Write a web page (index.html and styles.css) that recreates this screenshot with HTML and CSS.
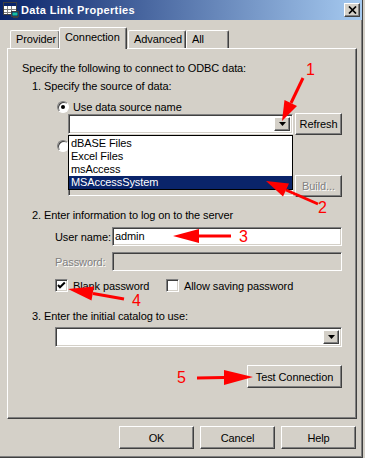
FILE: index.html
```html
<!DOCTYPE html>
<html lang="en">

<head>
    <meta charset="UTF-8">
    <meta name="viewport" content="width=device-width, initial-scale=1.0">
    <title>Data Link Properties</title>
    <link rel="stylesheet" href="styles.css">
</head>

<body>
    <div class="window">
        <div class="titlebar">
            <svg class="app-icon" width="16" height="16" viewBox="0 0 16 16">
                <rect x="0.5" y="0.5" width="13" height="12" fill="#fff" stroke="#404040" />
                <rect x="1" y="1" width="12" height="3" fill="#0a246a" />
                <path d="M1 7.5h12M1 10.5h12M4.5 4v8M8.5 4v8" stroke="#808080" />
                <rect x="8.5" y="9.5" width="7" height="5" fill="#0a246a" stroke="#404040" />
                <rect x="9.5" y="10.5" width="5" height="3" fill="#18c0a0" />
                <rect x="10" y="14.5" width="5" height="1.5" fill="#404040" />
            </svg>
            <span class="title">Data Link Properties</span>
            <span class="btn close-btn">
                <svg width="9" height="8" viewBox="0 0 9 8">
                    <path d="M1 0.5l7 7M8 0.5l-7 7" stroke="#000" stroke-width="1.7" />
                </svg>
            </span>
        </div>

        <div class="tabs">
            <div class="tab provider">Provider</div>
            <div class="tab connection active">Connection</div>
            <div class="tab advanced">Advanced</div>
            <div class="tab all">All</div>
        </div>

        <div class="panel">
            <div class="line">Specify the following to connect to ODBC data:</div>
            <div class="line step step-one">1. Specify the source of data:</div>
            <div class="option use-dsn"><span class="radio checked"></span>Use data source name</div>
            <div class="control-row source-row">
                <div class="field combo wide">
                    <span class="btn drop-btn">
                        <svg width="7" height="4" viewBox="0 0 7 4"><polygon points="0,0 7,0 3.5,4" /></svg>
                    </span>
                    <ul class="dropdown">
                        <li>dBASE Files</li>
                        <li>Excel Files</li>
                        <li>msAccess</li>
                        <li class="selected">MSAccessSystem</li>
                    </ul>
                </div>
                <button class="btn side-btn">Refresh</button>
            </div>
            <div class="option use-string"><span class="radio"></span></div>
            <div class="control-row build-row">
                <div class="field disabled wide"></div>
                <button class="btn side-btn disabled-text">Build...</button>
            </div>

            <div class="line step step-two">2. Enter information to log on to the server</div>
            <div class="login-row user-row">
                <span class="login-label">User name:</span>
                <div class="field text-field">admin</div>
            </div>
            <div class="login-row pass-row">
                <span class="login-label disabled-text">Password:</span>
                <div class="field text-field disabled"></div>
            </div>
            <div class="check-row">
                <span class="check-item blank">
                    <span class="checkbox">
                        <svg width="9" height="9" viewBox="0 0 9 9">
                            <path d="M1 4l2 2.2L7.8 1.5" fill="none" stroke="#000" stroke-width="2" />
                        </svg>
                    </span>
                    Blank password
                </span>
                <span class="check-item"><span class="checkbox"></span>Allow saving password</span>
            </div>

            <div class="line step step-three">3. Enter the initial catalog to use:</div>
            <div class="field combo catalog-combo">
                <span class="btn drop-btn">
                    <svg width="7" height="4" viewBox="0 0 7 4"><polygon points="0,0 7,0 3.5,4" /></svg>
                </span>
            </div>
            <div class="test-row">
                <button class="btn test-btn">Test Connection</button>
            </div>
        </div>

        <div class="dialog-buttons">
            <button class="btn dialog-btn">OK</button>
            <button class="btn dialog-btn">Cancel</button>
            <button class="btn dialog-btn">Help</button>
        </div>

        <!-- red callouts drawn over the dialog -->
        <svg class="annotations" width="365" height="458" viewBox="0 0 365 458">
            <g stroke="#f00" stroke-width="3">
                <line x1="303" y1="78" x2="291" y2="103" />
                <line x1="318" y1="204" x2="286" y2="190" />
                <line x1="231" y1="236" x2="199" y2="236" />
                <line x1="124" y1="299" x2="93" y2="293.5" />
                <line x1="197" y1="378" x2="224" y2="377.5" />
            </g>
            <g fill="#f00">
                <polygon points="282,121 297,106 284.5,100" />
                <polygon points="266,181 289,183.5 283,196.5" />
                <polygon points="173,236 199,229 199,243" />
                <polygon points="68,289 94,286.5 91.5,300.5" />
                <polygon points="253,377 224,370 224,385" />
            </g>
            <g class="marks">
                <text x="306" y="75">1</text>
                <text x="318" y="213">2</text>
                <text x="239" y="242">3</text>
                <text x="132" y="306">4</text>
                <text x="177" y="383">5</text>
            </g>
        </svg>
    </div>
</body>

</html>
```

FILE: styles.css
```css
* {
    box-sizing: border-box;
}

body {
    margin: 0;
    background: #d4d0c8;
    font-family: "Liberation Sans", Arial, sans-serif;
    font-size: 11px;
    letter-spacing: -0.1px;
    color: #000;
}

.window {
    position: relative;
    width: 363px;
    height: 458px;
    border-right: 1px solid #404040;
    border-bottom: 1px solid #404040;
    box-shadow: inset -1px -1px #808080;
}

/* title bar */

.titlebar {
    height: 20px;
    display: flex;
    align-items: center;
    padding: 0 2px 0 3px;
    background: linear-gradient(to right, #0a246a, #a6caf0);
}

.app-icon {
    flex: none;
}

.title {
    flex: 1;
    margin-left: 2px;
    color: #fff;
    font-weight: bold;
    font-size: 11px;
    letter-spacing: 0.35px;
}

.btn {
    font: inherit;
    letter-spacing: inherit;
    color: #000;
    background: #d4d0c8;
    border: 1px solid;
    border-color: #fff #404040 #404040 #fff;
    box-shadow: inset -1px -1px #808080;
    padding: 0;
}

.close-btn {
    width: 16px;
    height: 14px;
    display: flex;
    align-items: center;
    justify-content: center;
}

/* tabs */

.tabs {
    height: 22px;
    margin-top: 7px;
    margin-bottom: -1px;
    padding-left: 10px;
    display: flex;
    align-items: flex-end;
}

.tab {
    height: 18px;
    margin-bottom: 1px;
    padding-left: 5px;
    line-height: 17px;
    white-space: nowrap;
    background: #d4d0c8;
    border: 1px solid;
    border-color: #fff #404040 transparent #fff;
    border-bottom: none;
    border-radius: 2px 2px 0 0;
    box-shadow: inset -1px 0 #808080;
}

.tab.provider {
    width: 50px;
}

.tab.connection {
    width: 68px;
    margin-left: -1px;
}

.tab.advanced {
    width: 58px;
    margin-left: 1px;
}

.tab.all {
    width: 43px;
}

.tab.active {
    position: relative;
    z-index: 1;
    height: 22px;
    margin-bottom: 0;
    line-height: 19px;
}

/* panel */

.panel {
    width: 350px;
    height: 371px;
    margin-left: 7px;
    padding: 13px 14px 0;
    border: 1px solid;
    border-color: #fff #404040 #404040 #fff;
    box-shadow: inset -1px -1px #808080;
}

.line {
    height: 13px;
    line-height: 13px;
    white-space: nowrap;
}

.step {
    padding-left: 10px;
}

.step-one {
    margin-top: 5px;
}

.step-two {
    margin-top: 12px;
}

.step-three {
    margin-top: 18px;
}

.option {
    height: 13px;
    padding-left: 35px;
    display: flex;
    align-items: center;
    gap: 4px;
}

.use-dsn {
    margin-top: 7px;
}

.use-string {
    margin-top: 4px;
}

.radio {
    width: 12px;
    height: 12px;
    border-radius: 50%;
    background: #fff;
    border: 1px solid;
    border-color: #808080 #fff #fff #808080;
    box-shadow: inset 1px 1px #404040;
    display: flex;
    align-items: center;
    justify-content: center;
}

.radio.checked::after {
    content: "";
    width: 4px;
    height: 4px;
    border-radius: 50%;
    background: #000;
}

.field {
    background: #fff;
    border: 1px solid;
    border-color: #808080 #fff #fff #808080;
    box-shadow: inset 1px 1px #404040, inset -1px -1px #d4d0c8;
}

.field.disabled {
    background: #d4d0c8;
}

.control-row {
    height: 22px;
    padding-left: 46px;
    display: flex;
    align-items: center;
    gap: 2px;
}

.build-row {
    margin-top: 23px;
}

.wide {
    width: 225px;
    height: 20px;
}

.side-btn {
    width: 47px;
    height: 22px;
}

.combo {
    position: relative;
    display: flex;
    justify-content: flex-end;
    padding: 2px;
}

.drop-btn {
    width: 16px;
    height: 100%;
    display: flex;
    align-items: center;
    justify-content: center;
}

.dropdown {
    position: absolute;
    z-index: 2;
    left: -1px;
    top: calc(100% + 2px);
    width: 225px;
    margin: 0;
    padding: 1px 0 0;
    list-style: none;
    background: #fff;
    border: 1px solid #000;
}

.dropdown li {
    height: 13px;
    line-height: 13px;
    padding-left: 2px;
}

.dropdown li.selected {
    background: #0a246a;
    color: #fff;
}

.disabled-text {
    color: #808080;
    text-shadow: 1px 1px #fff;
}

/* logon */

.login-row {
    height: 19px;
    padding-left: 33px;
    display: flex;
    align-items: center;
}

.user-row {
    margin-top: 5px;
}

.pass-row {
    margin-top: 6px;
}

.login-label {
    width: 57px;
}

.text-field {
    flex: 1;
    height: 19px;
    padding-left: 2px;
    line-height: 17px;
}

.check-row {
    height: 13px;
    margin-top: 8px;
    padding-left: 33px;
    display: flex;
    align-items: center;
}

.check-item {
    display: flex;
    align-items: center;
    gap: 5px;
}

.check-item.blank {
    width: 111px;
}

.checkbox {
    width: 13px;
    height: 13px;
    background: #fff;
    border: 1px solid;
    border-color: #808080 #fff #fff #808080;
    box-shadow: inset 1px 1px #404040, inset -1px -1px #d4d0c8;
    display: flex;
    align-items: center;
    justify-content: center;
}

.catalog-combo {
    height: 20px;
    margin-top: 4px;
    margin-left: 33px;
}

.test-row {
    margin-top: 18px;
    display: flex;
    justify-content: flex-end;
}

.test-btn {
    width: 95px;
    height: 23px;
}

/* dialog buttons */

.dialog-buttons {
    margin-top: 7px;
    padding-right: 6px;
    display: flex;
    justify-content: flex-end;
    gap: 6px;
}

.dialog-btn {
    width: 75px;
    height: 23px;
}

.annotations {
    position: absolute;
    z-index: 3;
    top: 0;
    left: 0;
    pointer-events: none;
}

.marks {
    font-family: "Liberation Sans", Arial, sans-serif;
    font-size: 16px;
    letter-spacing: 0;
    fill: #f00;
}
```
